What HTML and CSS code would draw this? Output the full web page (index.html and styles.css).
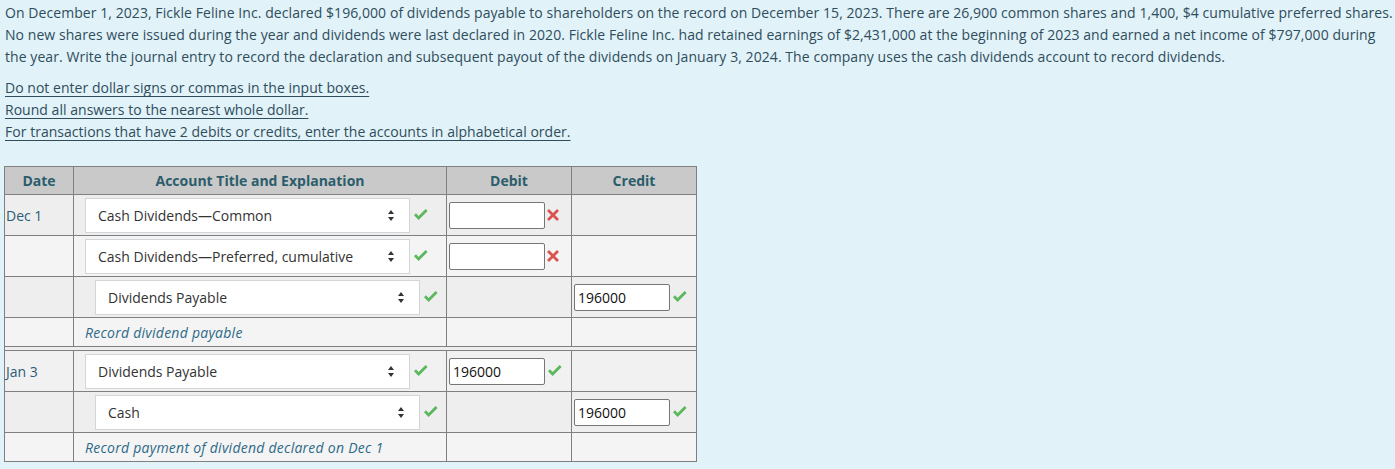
FILE: index.html
```html
<!DOCTYPE html>
<html>
<head>
<meta charset="utf-8">
<link rel="stylesheet" href="styles.css">
</head>
<body>
<div class="page">
  <p class="intro">On December 1, 2023, Fickle Feline Inc. declared $196,000 of dividends payable to shareholders on the record on December 15, 2023. There are 26,900 common shares and 1,400, $4 cumulative preferred shares. No new shares were issued during the year and dividends were last declared in 2020. Fickle Feline Inc. had retained earnings of $2,431,000 at the beginning of 2023 and earned a net income of $797,000 during the year. Write the journal entry to record the declaration and subsequent payout of the dividends on January 3, 2024. The company uses the cash dividends account to record dividends.</p>
  <div class="notes">
    <div><span class="u">Do not enter dollar signs or commas in the input boxes.</span></div>
    <div><span class="u">Round all answers to the nearest whole dollar.</span></div>
    <div><span class="u">For transactions that have 2 debits or credits, enter the accounts in alphabetical order.</span></div>
  </div>

  <table class="journal">
    <colgroup>
      <col class="c-date"><col class="c-acct"><col class="c-amt"><col class="c-amt">
    </colgroup>
    <thead>
      <tr><th>Date</th><th>Account Title and Explanation</th><th>Debit</th><th>Credit</th></tr>
    </thead>
    <tbody>
      <tr class="r-a">
        <td class="date">Dec 1</td>
        <td class="acct"><div class="sel-wrap"><div class="sel"><span>Cash Dividends—Common</span><span class="arr"></span></div><span class="ok"></span></div></td>
        <td class="amt"><div class="in-wrap"><div class="inp"></div><span class="bad"></span></div></td>
        <td class="amt"></td>
      </tr>
      <tr class="r-b">
        <td class="date"></td>
        <td class="acct"><div class="sel-wrap"><div class="sel"><span>Cash Dividends—Preferred, cumulative</span><span class="arr"></span></div><span class="ok"></span></div></td>
        <td class="amt"><div class="in-wrap"><div class="inp"></div><span class="bad"></span></div></td>
        <td class="amt"></td>
      </tr>
      <tr class="r-a">
        <td class="date"></td>
        <td class="acct"><div class="sel-wrap indent"><div class="sel"><span>Dividends Payable</span><span class="arr"></span></div><span class="ok"></span></div></td>
        <td class="amt"></td>
        <td class="amt"><div class="in-wrap"><div class="inp">196000</div><span class="ok"></span></div></td>
      </tr>
      <tr class="r-b expl">
        <td class="date"></td>
        <td class="acct"><em>Record dividend payable</em></td>
        <td class="amt"></td>
        <td class="amt"></td>
      </tr>
      <tr class="spacer"><td></td><td></td><td></td><td></td></tr>
      <tr class="r-c">
        <td class="date">Jan 3</td>
        <td class="acct"><div class="sel-wrap"><div class="sel"><span>Dividends Payable</span><span class="arr"></span></div><span class="ok"></span></div></td>
        <td class="amt"><div class="in-wrap"><div class="inp">196000</div><span class="ok"></span></div></td>
        <td class="amt"></td>
      </tr>
      <tr class="r-a">
        <td class="date"></td>
        <td class="acct"><div class="sel-wrap indent"><div class="sel"><span>Cash</span><span class="arr"></span></div><span class="ok"></span></div></td>
        <td class="amt"></td>
        <td class="amt"><div class="in-wrap"><div class="inp">196000</div><span class="ok"></span></div></td>
      </tr>
      <tr class="r-b expl">
        <td class="date"></td>
        <td class="acct"><em>Record payment of dividend declared on Dec 1</em></td>
        <td class="amt"></td>
        <td class="amt"></td>
      </tr>
    </tbody>
  </table>
</div>
</body>
</html>
```

FILE: styles.css
```css
html, body {
  margin: 0;
  padding: 0;
  background: #e1f2f8;
}
body {
  font-family: "Open Sans", "Noto Sans", sans-serif;
  font-size: 14px;
  color: #2f4d5c;
}
.page {
  padding: 2px 0 0 4px;
}
.intro {
  margin: 0;
  padding-left: 1px;
  line-height: 22px;
  letter-spacing: 0.065px;
}
.notes {
  margin-top: 9px;
  padding-left: 1px;
  line-height: 22px;
  letter-spacing: 0.03px;
}
.u {
  text-decoration: underline;
  text-underline-offset: 3px;
}
.journal {
  margin-top: 23px;
  border-collapse: collapse;
  table-layout: fixed;
  width: 693px;
  border: 1px solid #808080;
}
.c-date { width: 69px; }
.c-acct { width: 373px; }
.c-amt { width: 125px; }
.journal th {
  background: #c9c9c9;
  color: #2b5d6c;
  font-weight: 700;
  height: 27px;
  padding: 0;
  border: 1px solid #808080;
  text-align: center;
}
.journal td {
  border: 1px solid #808080;
  padding: 0;
  vertical-align: middle;
}
.r-a td { background: #eeeeee; }
.r-b td { background: #f4f4f4; }
.r-c td { background: #f1f1f1; }
.journal tr.r-a, .journal tr.r-b, .journal tr.r-c { height: 41px; }
.journal tr.expl { height: 29px; }
.spacer td {
  height: 3px;
  background: #eeeeee;
  border-left: none;
  border-right: none;
}
.date {
  color: #2c5c78;
  padding-left: 1px !important;
}
.acct {
  padding-left: 11px !important;
}
.acct em {
  color: #2e6a88;
  font-style: italic;
  letter-spacing: 0.25px;
}
.sel-wrap {
  display: flex;
  align-items: center;
}
.sel-wrap.indent {
  padding-left: 10px;
}
.sel {
  box-sizing: border-box;
  width: 325px;
  height: 35px;
  background: #fff;
  border: 1px solid #d3d6d9;
  display: flex;
  align-items: center;
  justify-content: space-between;
  padding: 0 14px 0 12px;
  color: #333;
}
.arr {
  width: 7px;
  height: 11px;
  position: relative;
}
.arr::before, .arr::after {
  content: "";
  position: absolute;
  left: 0;
  border-left: 3.5px solid transparent;
  border-right: 3.5px solid transparent;
}
.arr::before {
  top: 0;
  border-bottom: 4px solid #333;
}
.arr::after {
  bottom: 0;
  border-top: 4px solid #333;
}
.ok, .bad {
  display: inline-block;
  width: 16px;
  height: 14px;
  margin-left: 2px;
  background-repeat: no-repeat;
  background-position: center;
}
.ok {
  background-image: url("data:image/svg+xml;utf8,<svg xmlns='http://www.w3.org/2000/svg' width='16' height='14' viewBox='0 0 16 14'><path d='M1 7.2 L3 5.3 L5.6 7.9 L12.6 1 L14.6 3 L5.6 12 Z' fill='%235cb85c'/></svg>");
}
.bad {
  width: 12px;
  background-image: url("data:image/svg+xml;utf8,<svg xmlns='http://www.w3.org/2000/svg' width='12' height='12' viewBox='0 0 12 12'><path d='M2 2 L10 10 M10 2 L2 10' fill='none' stroke='%23d9534f' stroke-width='2.8' stroke-linecap='square'/></svg>");
}
.acct .ok { margin-left: 3px; }
.in-wrap {
  display: flex;
  align-items: center;
  padding-left: 2px;
}
.inp {
  box-sizing: border-box;
  width: 96px;
  height: 27px;
  background: #fff;
  border: 1px solid #767676;
  border-radius: 2px;
  padding-left: 3px;
  line-height: 25px;
  color: #111;
}
```
